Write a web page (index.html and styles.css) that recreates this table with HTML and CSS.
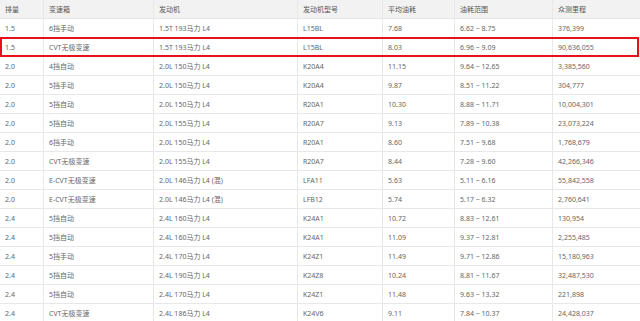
FILE: index.html
```html
<!DOCTYPE html>
<html lang="zh-CN">
<head>
  <meta charset="UTF-8" />
  <meta name="viewport" content="width=device-width, initial-scale=1.0" />
  <title>车型油耗</title>
  <link rel="stylesheet" href="styles.css">
</head>
<body>
  <div class="spec-table">
    <div class="row head">
      <div class="cell">排量</div>
      <div class="cell">变速箱</div>
      <div class="cell">发动机</div>
      <div class="cell">发动机型号</div>
      <div class="cell">平均油耗</div>
      <div class="cell">油耗范围</div>
      <div class="cell">众测里程</div>
    </div>
    <div class="row">
      <div class="cell">1.5</div><div class="cell">6挡手动</div><div class="cell">1.5T 193马力 L4</div><div class="cell">L15BL</div><div class="cell">7.68</div><div class="cell">6.62 ~ 8.75</div><div class="cell">376,399</div>
    </div>
    <div class="row marked">
      <div class="cell">1.5</div><div class="cell">CVT无极变速</div><div class="cell">1.5T 193马力 L4</div><div class="cell">L15BL</div><div class="cell">8.03</div><div class="cell">6.96 ~ 9.09</div><div class="cell">90,636,055</div>
    </div>
    <div class="row">
      <div class="cell">2.0</div><div class="cell">4挡自动</div><div class="cell">2.0L 150马力 L4</div><div class="cell">K20A4</div><div class="cell">11.15</div><div class="cell">9.64 ~ 12.65</div><div class="cell">3,385,560</div>
    </div>
    <div class="row">
      <div class="cell">2.0</div><div class="cell">5挡手动</div><div class="cell">2.0L 150马力 L4</div><div class="cell">K20A4</div><div class="cell">9.87</div><div class="cell">8.51 ~ 11.22</div><div class="cell">304,777</div>
    </div>
    <div class="row">
      <div class="cell">2.0</div><div class="cell">5挡自动</div><div class="cell">2.0L 150马力 L4</div><div class="cell">R20A1</div><div class="cell">10.30</div><div class="cell">8.88 ~ 11.71</div><div class="cell">10,004,301</div>
    </div>
    <div class="row">
      <div class="cell">2.0</div><div class="cell">5挡自动</div><div class="cell">2.0L 155马力 L4</div><div class="cell">R20A7</div><div class="cell">9.13</div><div class="cell">7.89 ~ 10.38</div><div class="cell">23,073,224</div>
    </div>
    <div class="row">
      <div class="cell">2.0</div><div class="cell">6挡手动</div><div class="cell">2.0L 150马力 L4</div><div class="cell">R20A1</div><div class="cell">8.60</div><div class="cell">7.51 ~ 9.68</div><div class="cell">1,768,679</div>
    </div>
    <div class="row">
      <div class="cell">2.0</div><div class="cell">CVT无极变速</div><div class="cell">2.0L 155马力 L4</div><div class="cell">R20A7</div><div class="cell">8.44</div><div class="cell">7.28 ~ 9.60</div><div class="cell">42,266,346</div>
    </div>
    <div class="row">
      <div class="cell">2.0</div><div class="cell">E-CVT无极变速</div><div class="cell">2.0L 146马力 L4 (混)</div><div class="cell">LFA11</div><div class="cell">5.63</div><div class="cell">5.11 ~ 6.16</div><div class="cell">55,842,558</div>
    </div>
    <div class="row">
      <div class="cell">2.0</div><div class="cell">E-CVT无极变速</div><div class="cell">2.0L 146马力 L4 (混)</div><div class="cell">LFB12</div><div class="cell">5.74</div><div class="cell">5.17 ~ 6.32</div><div class="cell">2,760,641</div>
    </div>
    <div class="row">
      <div class="cell">2.4</div><div class="cell">5挡自动</div><div class="cell">2.4L 160马力 L4</div><div class="cell">K24A1</div><div class="cell">10.72</div><div class="cell">8.83 ~ 12.61</div><div class="cell">130,954</div>
    </div>
    <div class="row">
      <div class="cell">2.4</div><div class="cell">5挡自动</div><div class="cell">2.4L 160马力 L4</div><div class="cell">K24A1</div><div class="cell">11.09</div><div class="cell">9.37 ~ 12.81</div><div class="cell">2,255,485</div>
    </div>
    <div class="row">
      <div class="cell">2.4</div><div class="cell">5挡手动</div><div class="cell">2.4L 170马力 L4</div><div class="cell">K24Z1</div><div class="cell">11.49</div><div class="cell">9.71 ~ 12.86</div><div class="cell">15,180,963</div>
    </div>
    <div class="row">
      <div class="cell">2.4</div><div class="cell">5挡自动</div><div class="cell">2.4L 190马力 L4</div><div class="cell">K24Z8</div><div class="cell">10.24</div><div class="cell">8.81 ~ 11.67</div><div class="cell">32,487,530</div>
    </div>
    <div class="row">
      <div class="cell">2.4</div><div class="cell">5挡自动</div><div class="cell">2.4L 170马力 L4</div><div class="cell">K24Z1</div><div class="cell">11.48</div><div class="cell">9.63 ~ 13.32</div><div class="cell">221,898</div>
    </div>
    <div class="row">
      <div class="cell">2.4</div><div class="cell">CVT无极变速</div><div class="cell">2.4L 186马力 L4</div><div class="cell">K24V6</div><div class="cell">9.11</div><div class="cell">7.84 ~ 10.37</div><div class="cell">24,428,037</div>
    </div>
  </div>
</body>
</html>
```

FILE: styles.css
```css
/* Base */
body {
  margin: 0;
  background: #fff;
  font-family: "Noto Sans", "Noto Sans CJK SC", sans-serif;
  font-size: 7px;
  color: #666;
  overflow: hidden;
}

.spec-table {
  width: 640px;
}

.row {
  display: grid;
  grid-template-columns: 44px 110px 144px 85px 72px 98px 1fr;
  height: 19px;
  border-bottom: 1px solid #e8e8e8;
  box-sizing: border-box;
}

.row.head {
  background: #f2f2f2;
  color: #555;
}

.cell {
  display: flex;
  align-items: center;
  padding-left: 5px;
  border-right: 1px solid #e8e8e8;
  white-space: nowrap;
  overflow: hidden;
}

.cell:last-child {
  border-right: none;
}

/* red annotation box */
.row.marked {
  position: relative;
}
.row.marked::after {
  content: "";
  position: absolute;
  left: 0;
  right: 1px;
  top: -1px;
  bottom: -1px;
  border: 2px solid #e8101a;
  pointer-events: none;
}
```
